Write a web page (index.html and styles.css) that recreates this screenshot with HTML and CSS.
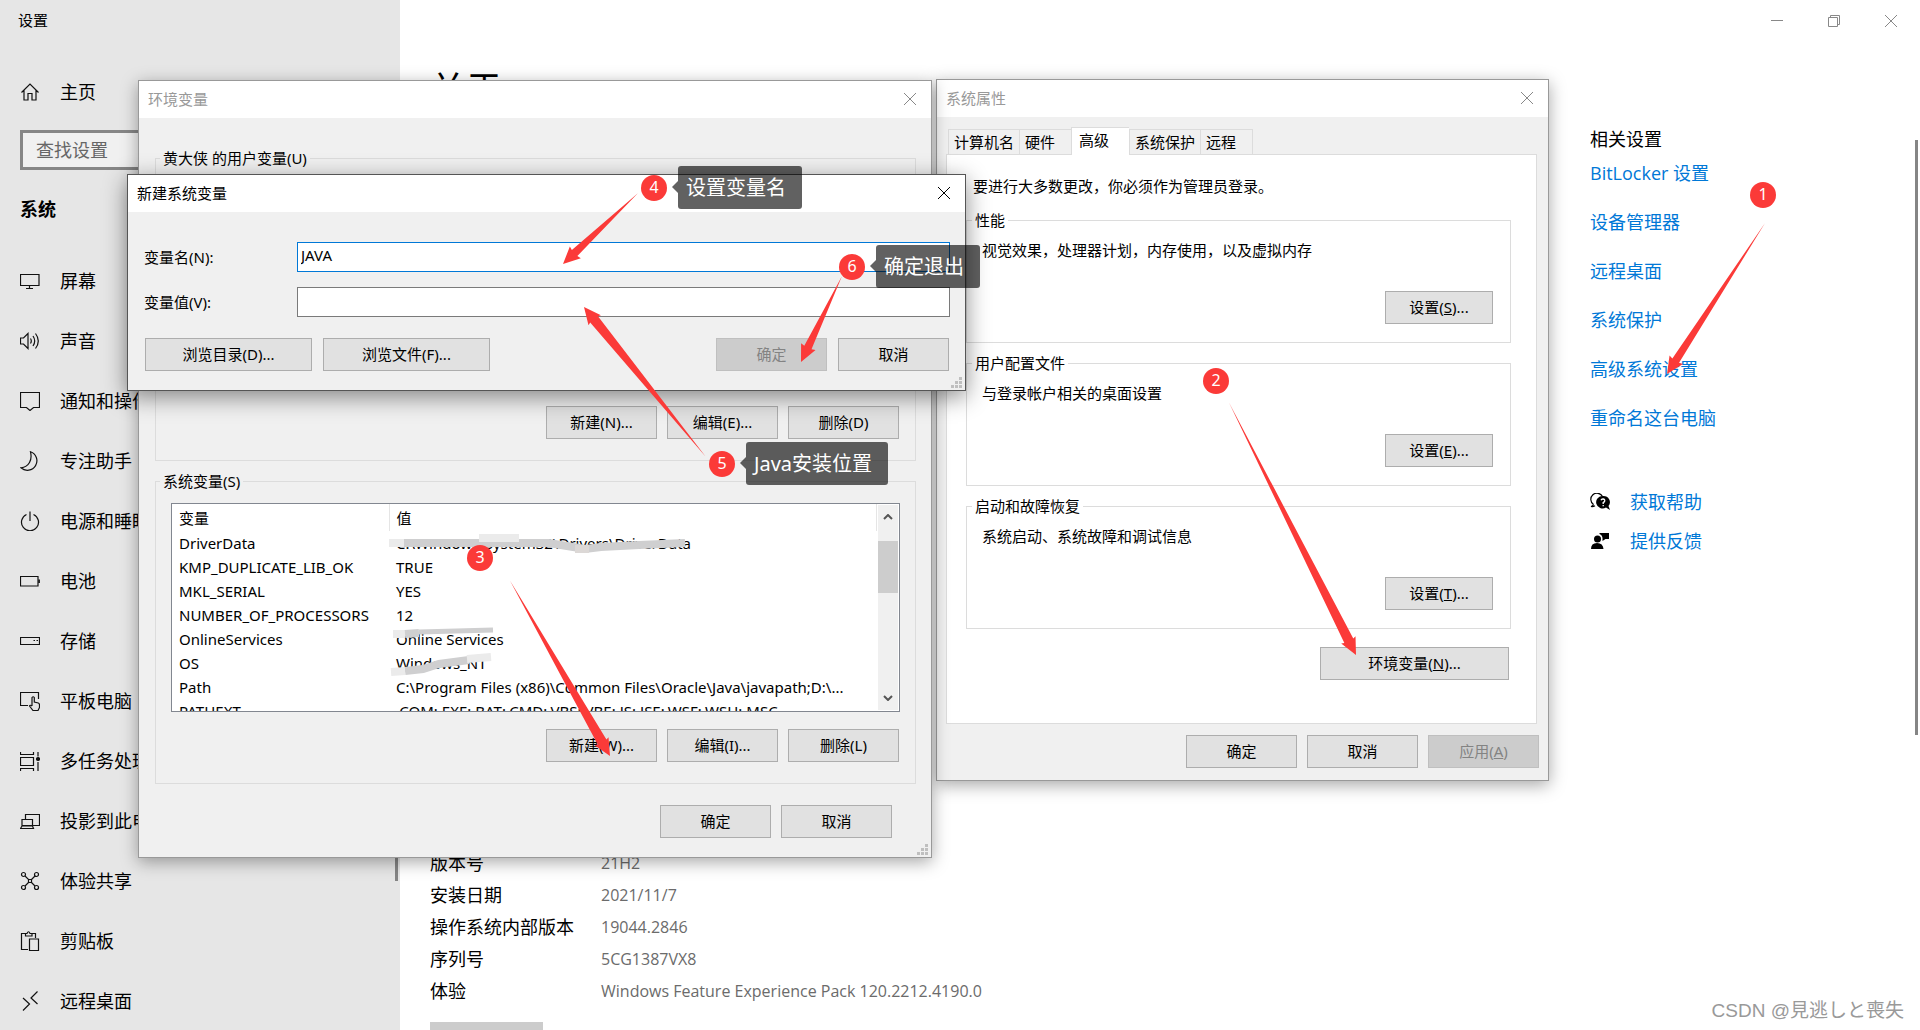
FILE: index.html
```html
<!DOCTYPE html>
<html lang="zh-CN">

<head>
    <meta charset="UTF-8">
    <title>设置</title>
    <link rel="stylesheet" href="styles.css">
</head>

<body>

    <div class="settings">
        <aside class="sidebar">
            <div class="app_title">设置</div>
            <a class="item home" href="#">
                <svg class="icon" viewBox="0 0 20 20"><path d="M1.5 10.5L10 2l8.500 8.500M4 8.500V18h4v-6.500h4V18h4V8.500" /></svg>主页
            </a>
            <input class="search" type="text" placeholder="查找设置" aria-label="查找设置">
            <h2>系统</h2>
            <nav>
                <a class="item" href="#"><svg class="icon" viewBox="0 0 20 20"><path d="M.5 3.500h18.500v11H.5zM9.500 14.500V17M6 17.500h7" /></svg>屏幕</a>
                <a class="item" href="#"><svg class="icon" viewBox="0 0 20 20"><path d="M.5 7h3L8 2.500v15L3.500 13h-3zM10.500 7.500q1.600 2.500 0 5M13 5q3.400 5 0 10M15.500 2.500q5.600 7.500 0 15" /></svg>声音</a>
                <a class="item" href="#"><svg class="icon" viewBox="0 0 20 20"><path d="M.5 1.500h19v15h-6L10 19.500l-3.500-3h-6z" /></svg>通知和操作</a>
                <a class="item" href="#"><svg class="icon" viewBox="0 0 20 20"><path d="M10.500 .8a9.500 9.500 0 1 1-9.500 16C9 16 12.500 9 10.500 .8z" /></svg>专注助手</a>
                <a class="item" href="#"><svg class="icon" viewBox="0 0 20 20"><path d="M10 .5v9.500M6.500 3.500a8.500 8.500 0 1 0 7 0" /></svg>电源和睡眠</a>
                <a class="item" href="#"><svg class="icon" viewBox="0 0 20 20"><path d="M.5 5.500h17.500v9.500H.5zM19.300 8.500v3.500" /></svg>电池</a>
                <a class="item" href="#"><svg class="icon" viewBox="0 0 20 20"><path d="M.5 6.500h19v7H.5zM13.500 9.500h1.500M16.500 9.500h1.500" /></svg>存储</a>
                <a class="item" href="#"><svg class="icon" viewBox="0 0 20 20"><path d="M8 14.500H.5v-13h18V8M12 15V6.500q1.200-1.500 2.300 0V11l4 1q1.200.5 1.200 2v2.500l-1.500 3h-5L9.500 15q.5-1.500 2.500 0" /></svg>平板电脑</a>
                <a class="item" href="#"><svg class="icon" viewBox="0 0 20 20"><path d="M.5 1v2.500h13V1M.5 6.500h13v8H.5zM.5 20v-2.500h13V20M18 1v4.500M18 11v9" /><circle class="solid" cx="18" cy="8" r="1.500" /></svg>多任务处理</a>
                <a class="item" href="#"><svg class="icon" viewBox="0 0 20 20"><path d="M5.500 8V3.500h14v11H13M2 8.500h10.500v6H2zM.5 17.500h13l-1-2.500H2z" /></svg>投影到此电脑</a>
                <a class="item" href="#"><svg class="icon" viewBox="0 0 20 20"><circle cx="3.500" cy="3.500" r="2" /><circle cx="16.500" cy="3.500" r="2" /><circle cx="3.500" cy="16.500" r="2" /><circle cx="16.500" cy="16.500" r="2" /><path d="M5 5l3.500 3.500h3v3h-3v-3M15 5l-3.500 3.500M5 15l3.500-3.500M15 15l-3.500-3.500" /></svg>体验共享</a>
                <a class="item" href="#"><svg class="icon" viewBox="0 0 20 20"><path d="M8 18.500H1.500v-16H5M12 2.500h3.500V7M5.500 5V2.500h1.500q1.500-3.500 3 0h2V5zM9.500 8h9v11.500h-9z" /></svg>剪贴板</a>
                <a class="item" href="#"><svg class="icon" viewBox="0 0 20 20"><path d="M3 7l6.500 6L3 19.500M17.500 .5L11 7l6.500 6" /></svg>远程桌面</a>
            </nav>
            <div class="side_thumb"></div>
        </aside>

        <main>
            <h1>关于</h1>
            <dl class="specs">
                <dt>版本号</dt>
                <dd>21H2</dd>
                <dt>安装日期</dt>
                <dd>2021/11/7</dd>
                <dt>操作系统内部版本</dt>
                <dd>19044.2846</dd>
                <dt>序列号</dt>
                <dd>5CG1387VX8</dd>
                <dt>体验</dt>
                <dd>Windows Feature Experience Pack 120.2212.4190.0</dd>
            </dl>
            <button class="copy" aria-label="复制"></button>
        </main>

        <aside class="related">
            <div class="window_buttons">
                <button aria-label="最小化"><svg viewBox="0 0 12 12"><path d="M0 5.500h12" /></svg></button>
                <button aria-label="还原"><svg viewBox="0 0 12 12"><path d="M.5 2.500h9v9h-9zM2.500 2.500v-2h9v9h-2" /></svg></button>
                <button aria-label="关闭"><svg viewBox="0 0 12 12"><path d="M0 0l12 12M12 0L0 12" /></svg></button>
            </div>
            <h3>相关设置</h3>
            <a href="#">BitLocker 设置</a>
            <a href="#">设备管理器</a>
            <a href="#">远程桌面</a>
            <a href="#">系统保护</a>
            <a href="#">高级系统设置</a>
            <a href="#">重命名这台电脑</a>
            <div class="help">
                <a href="#"><svg viewBox="0 0 20 18"><path class="line" d="M3.500 11.500A6.200 6.200 0 1 1 12.500 3.500M3.500 11.500q-.5 1.800-2.500 2 2 .5 4-.8" /><path d="M13 3a6.500 6.200 0 1 0 3 11.500L20 17l-1.500-4A6.500 6.200 0 0 0 13 3z" /><path class="mark" d="M11 7.300q.5-1.500 2.200-1.300 1.800.3 1.500 2-.2 1-1.500 1.500V11M13.200 12v1.300" /></svg>获取帮助</a>
                <a href="#"><svg viewBox="0 0 20 18"><circle cx="7.500" cy="7" r="3.500" /><path d="M1 17q0-6 6-6t6.500 6zM9.500 1h9.500v6h-3.500L12.500 9V6.500Q12.500 3 9.500 2z" /></svg>提供反馈</a>
            </div>
            <div class="page_thumb"></div>
        </aside>
    </div>

    <!-- 系统属性 -->
    <section class="dialog system_dialog">
        <header>系统属性<button class="close" aria-label="关闭"><svg viewBox="0 0 12 12"><path d="M0 0l12 12M12 0L0 12" /></svg></button></header>
        <div class="system_body">
            <div class="tabs" role="tablist">
                <button role="tab">计算机名</button>
                <button role="tab" class="tab_mid">硬件</button>
                <button role="tab" class="valgt" aria-selected="true">高级</button>
                <button role="tab">系统保护</button>
                <button role="tab" class="tab_mid">远程</button>
            </div>
            <div class="pane">
                <p>要进行大多数更改，你必须作为管理员登录。</p>
                <fieldset>
                    <legend>性能</legend>
                    <p>视觉效果，处理器计划，内存使用，以及虚拟内存</p>
                    <button class="btn">设置(<u>S</u>)...</button>
                </fieldset>
                <fieldset>
                    <legend>用户配置文件</legend>
                    <p>与登录帐户相关的桌面设置</p>
                    <button class="btn">设置(<u>E</u>)...</button>
                </fieldset>
                <fieldset>
                    <legend>启动和故障恢复</legend>
                    <p>系统启动、系统故障和调试信息</p>
                    <button class="btn">设置(<u>T</u>)...</button>
                </fieldset>
                <button class="btn env_button">环境变量(<u>N</u>)...</button>
            </div>
            <div class="buttons">
                <button class="btn">确定</button>
                <button class="btn">取消</button>
                <button class="btn" disabled>应用(<u>A</u>)</button>
            </div>
        </div>
    </section>

    <!-- 环境变量 -->
    <section class="dialog env_dialog">
        <header>环境变量<button class="close" aria-label="关闭"><svg viewBox="0 0 12 12"><path d="M0 0l12 12M12 0L0 12" /></svg></button></header>
        <div class="env_body">
            <fieldset>
                <legend>黄大侠 的用户变量(U)</legend>
                <div class="list"></div>
                <div class="buttons">
                    <button class="btn">新建(N)...</button>
                    <button class="btn">编辑(E)...</button>
                    <button class="btn">删除(D)</button>
                </div>
            </fieldset>
            <fieldset>
                <legend>系统变量(S)</legend>
                <div class="list">
                    <table>
                        <thead>
                            <tr><th>变量</th><th>值</th></tr>
                        </thead>
                        <tbody>
                            <tr><td>DriverData</td><td>C:\Windows\System32\Drivers\DriverData</td></tr>
                            <tr><td>KMP_DUPLICATE_LIB_OK</td><td>TRUE</td></tr>
                            <tr><td>MKL_SERIAL</td><td>YES</td></tr>
                            <tr><td>NUMBER_OF_PROCESSORS</td><td>12</td></tr>
                            <tr><td>OnlineServices</td><td>Online Services</td></tr>
                            <tr><td>OS</td><td>Windows_NT</td></tr>
                            <tr><td>Path</td><td>C:\Program Files (x86)\Common Files\Oracle\Java\javapath;D:\...</td></tr>
                            <tr><td>PATHEXT</td><td>.COM;.EXE;.BAT;.CMD;.VBS;.VBE;.JS;.JSE;.WSF;.WSH;.MSC</td></tr>
                        </tbody>
                    </table>
                    <div class="scrollbar">
                        <svg viewBox="0 0 10 6"><path d="M1 5l4-4 4 4" /></svg>
                        <div class="thumb"></div>
                        <svg viewBox="0 0 10 6"><path d="M1 1l4 4 4-4" /></svg>
                    </div>
                    <svg class="smudges" viewBox="0 0 340 180">
                        <path class="white" d="M4 32H150" />
                        <path d="M15 39H160L178 42 196 45 212 43 250 41 296 39" />
                        <path class="light" d="M0 39H15M90 34H130" />
                        <path class="warm" d="M186 45L200 45" />
                        <path class="thin" d="M30 128L104 126" />
                        <path class="light" d="M4 130H16" />
                        <path d="M16 130L30 129" />
                        <path d="M16 167L34 165 50 160 80 156" />
                        <path class="light" d="M2 168L16 167M78 155L102 153" />
                    </svg>
                </div>
                <div class="buttons">
                    <button class="btn">新建(W)...</button>
                    <button class="btn">编辑(I)...</button>
                    <button class="btn">删除(L)</button>
                </div>
            </fieldset>
            <div class="buttons bottom_buttons">
                <button class="btn">确定</button>
                <button class="btn">取消</button>
            </div>
        </div>
        <svg class="grip" viewBox="0 0 11 11"><path d="M8 0h3v3H8zM4 4h3v3H4zM8 4h3v3H8zM0 8h3v3H0zM4 8h3v3H4zM8 8h3v3H8z" /></svg>
    </section>

    <!-- 新建系统变量 -->
    <section class="dialog new_dialog">
        <header>新建系统变量<button class="close" aria-label="关闭"><svg viewBox="0 0 12 12"><path d="M0 0l12 12M12 0L0 12" /></svg></button></header>
        <div class="new_body">
            <div class="field">
                <label for="name">变量名(N):</label>
                <input id="name" class="active" type="text" value="JAVA">
            </div>
            <div class="field">
                <label for="value">变量值(V):</label>
                <input id="value" type="text">
            </div>
            <div class="buttons">
                <button class="btn wide">浏览目录(D)...</button>
                <button class="btn wide">浏览文件(F)...</button>
                <button class="btn push" disabled>确定</button>
                <button class="btn">取消</button>
            </div>
        </div>
        <svg class="grip" viewBox="0 0 11 11"><path d="M8 0h3v3H8zM4 4h3v3H4zM8 4h3v3H8zM0 8h3v3H0zM4 8h3v3H4zM8 8h3v3H8z" /></svg>
    </section>

    <!-- arrows and steps -->
    <svg class="arrows" width="1920" height="1030" viewBox="0 0 1920 1030">
        <path transform="translate(1667 374) rotate(123)" d="M0 0L-17-8-16-4-180 0-16 4-17 8z" />
        <path transform="translate(1356 655) rotate(63.3)" d="M0 0L-17-8-16-5-283 0-16 5-17 8z" />
        <path transform="translate(610 756) rotate(60.3)" d="M0 0L-17-8-16-5-202 0-16 5-17 8z" />
        <path transform="translate(563 264) rotate(136.6)" d="M0 0L-17-8-16-4-103 0-16 4-17 8z" />
        <path transform="translate(584 307) rotate(-129.1)" d="M0 0L-17-8-16-5-193 0-16 5-17 8z" />
        <path transform="translate(801 362) rotate(115.5)" d="M0 0L-17-8-16-4-95 0-16 4-17 8z" />
    </svg>
    <div class="note note1"><b>1</b></div>
    <div class="note note2"><b>2</b></div>
    <div class="note note3"><b>3</b></div>
    <div class="note note4"><b>4</b><span>设置变量名</span></div>
    <div class="note note5"><b>5</b><span>Java安装位置</span></div>
    <div class="note note6"><b>6</b><span>确定退出</span></div>

    <div class="watermark">CSDN @見逃しと喪失</div>

</body>

</html>
```
FILE: styles.css
```css
* {
    box-sizing: border-box;
}

body {
    margin: 0;
    height: 100vh;
    overflow: hidden;
    position: relative;
    background-color: white;
    color: black;
    font-family: "Noto Sans", "Noto Sans CJK SC", sans-serif;
    font-size: 15px;
    line-height: 20px;
}

button,
input {
    font: inherit;
    color: inherit;
}

a {
    text-decoration: none;
}

p,
h1,
h2,
h3,
dl,
dd {
    margin: 0;
}

/* Settings */

.settings {
    display: grid;
    grid-template-columns: 400px 1fr 330px;
    height: 100vh;
    overflow: hidden;
    font-family: "Open Sans", "Noto Sans CJK SC", sans-serif;
    font-size: 18px;
}

.sidebar {
    position: relative;
    background-color: #e6e6e6;
    overflow: hidden;
}

.app_title {
    padding: 10px 18px 0;
    font-size: 15px;
}

.item {
    display: flex;
    align-items: center;
    gap: 20px;
    height: 60px;
    padding-left: 20px;
    color: black;
    white-space: nowrap;
}

.home {
    margin-top: 32px;
}

.icon {
    width: 20px;
    height: 20px;
    flex: none;
    fill: none;
    stroke: #111;
    stroke-width: 1.2;
}

.icon .solid {
    fill: #111;
}

.search {
    display: block;
    width: 360px;
    height: 40px;
    margin: 8px 20px 0;
    padding: 0 13px;
    border: 3px solid #868686;
    border-radius: 0;
    background-color: #f0f0f0;
}

.search::placeholder {
    color: #666;
}

.sidebar h2 {
    margin: 29px 20px 32px;
    font-size: 18px;
    line-height: 20px;
}

.side_thumb {
    position: absolute;
    right: 2px;
    top: 240px;
    width: 3px;
    height: 641px;
    background-color: #858585;
}

main {
    padding: 66px 30px 0;
}

h1 {
    font-size: 36px;
    font-weight: normal;
    line-height: 48px;
}

.specs {
    display: grid;
    grid-template-columns: 171px 1fr;
    margin-top: 733px;
    line-height: 32px;
}

.specs dt {
    white-space: nowrap;
}

.specs dd {
    color: #6b6b6b;
    font-size: 16px;
}

.copy {
    display: block;
    width: 113px;
    height: 40px;
    margin-top: 15px;
    border: none;
    background-color: #ccc;
}

.related {
    position: relative;
}

.window_buttons {
    display: flex;
    justify-content: flex-end;
    height: 39px;
    padding-right: 1px;
}

.window_buttons button {
    width: 57px;
    border: none;
    background: none;
}

.window_buttons svg,
.close svg {
    width: 12px;
    height: 12px;
    fill: none;
    stroke: #888;
    overflow: visible;
}

h3 {
    margin: 90px 0 14px;
    font-size: 18px;
    font-weight: normal;
    line-height: 20px;
}

.related a {
    display: block;
    height: 49px;
    line-height: 20px;
    color: #0078d7;
}

.help {
    margin-top: 25px;
}

.related .help a {
    display: flex;
    align-items: center;
    gap: 20px;
    height: 39px;
}

.help svg {
    width: 20px;
    height: 18px;
    fill: black;
}

.help .line {
    fill: none;
    stroke: black;
    stroke-width: 1.2;
}

.help .mark {
    fill: none;
    stroke: white;
    stroke-width: 1.3;
}

.page_thumb {
    position: absolute;
    right: 2px;
    top: 140px;
    width: 3px;
    height: 595px;
    background-color: #858585;
}

/* Dialogs */

.dialog {
    position: absolute;
    border: 1px solid #999;
    background-color: #f0f0f0;
    box-shadow: 0 4px 16px rgba(0, 0, 0, .35);
}

.dialog header {
    display: flex;
    justify-content: space-between;
    align-items: center;
    height: 37px;
    padding: 0 0 2px 9px;
    background-color: white;
    color: #999;
}

.close {
    width: 43px;
    height: 35px;
    padding: 0;
    border: none;
    background: none;
}

.buttons {
    display: flex;
    justify-content: flex-end;
    gap: 10px;
}

.btn {
    width: 111px;
    height: 33px;
    padding: 0 0 2px;
    border: 1px solid #adadad;
    background-color: #e1e1e1;
    white-space: nowrap;
}

.btn:disabled {
    border-color: #bfbfbf;
    background-color: #ccc;
    color: #838383;
}

.btn:hover:enabled {
    border-color: #0078d7;
}

fieldset {
    min-width: 0;
    margin: 0;
    border: 1px solid #dcdcdc;
}

legend {
    padding: 0 3px;
}

.grip {
    position: absolute;
    right: 3px;
    bottom: 2px;
    width: 11px;
    height: 11px;
    fill: #bfbfbf;
}

.system_dialog {
    left: 936px;
    top: 79px;
    width: 613px;
}

.system_body {
    padding: 10px 11px 12px 9px;
}

.tabs {
    display: flex;
    align-items: flex-end;
    height: 27px;
    padding-left: 2px;
}

.tabs button {
    height: 25px;
    padding: 0 5px;
    border: 1px solid #dcdcdc;
    border-right: none;
    border-bottom: none;
    background-color: #f0f0f0;
}

.tabs button:last-child {
    border-right: 1px solid #dcdcdc;
}

.tabs .tab_mid {
    padding-right: 16px;
}

.tabs .valgt {
    position: relative;
    height: 28px;
    margin-bottom: -1px;
    padding: 0 20px 3px 7px;
    background-color: white;
}

.pane {
    height: 570px;
    padding: 21px 25px 0 19px;
    border: 1px solid #dcdcdc;
    background-color: white;
}

.pane > p {
    padding-left: 7px;
    margin-bottom: 14px;
}

.pane fieldset {
    display: flex;
    flex-direction: column;
    height: 133px;
    margin-bottom: 10px;
    padding: 10px 17px 0 15px;
}

.pane legend {
    margin-left: -10px;
}

.pane fieldset .btn {
    width: 108px;
    margin: 31px 0 0 auto;
}

.env_button {
    display: block;
    width: 189px;
    margin: 18px 2px 0 auto;
}

.system_body > .buttons {
    margin: 11px -2px 0 0;
}

.env_dialog {
    left: 138px;
    top: 80px;
    width: 794px;
}

.env_body {
    padding: 30px 15px 19px 16px;
}

.env_body fieldset {
    height: 313px;
    margin-bottom: 10px;
    padding: 12px 15px 0 15px;
}

.env_body legend {
    margin-left: -11px;
}

.env_body fieldset .buttons {
    padding-right: 1px;
}

.list {
    position: relative;
    display: flex;
    align-items: flex-start;
    height: 209px;
    margin-bottom: 17px;
    border: 1px solid #828790;
    background-color: white;
    overflow: hidden;
}

table {
    flex: 1;
    table-layout: fixed;
    border-collapse: collapse;
}

th,
td {
    height: 24px;
    padding: 0 7px;
    text-align: left;
    font-weight: normal;
    white-space: nowrap;
}

th {
    height: 27px;
    border-right: 1px solid #e5e5e5;
}

th:first-child {
    width: 217px;
}

.scrollbar {
    display: flex;
    flex-direction: column;
    align-items: center;
    align-self: stretch;
    width: 20px;
    margin: 1px;
    padding: 9px 0;
    background-color: #f0f0f0;
}

.scrollbar svg {
    width: 10px;
    height: 6px;
    fill: none;
    stroke: #555;
    stroke-width: 2;
}

.scrollbar .thumb {
    width: 20px;
    height: 52px;
    margin: 21px 0 auto;
    background-color: #cdcdcd;
}

.smudges {
    position: absolute;
    left: 217px;
    top: 0;
    width: 340px;
    height: 180px;
    overflow: visible;
    fill: none;
    stroke: #cfcfd0;
    stroke-width: 8;
}

.smudges .light {
    stroke: #ebebeb;
}

.smudges .white {
    stroke: white;
}

.smudges .warm {
    stroke: #dcd8d6;
}

.smudges .thin {
    stroke-width: 5;
}

.bottom_buttons {
    padding: 11px 24px 0 0;
}

.new_dialog {
    left: 127px;
    top: 174px;
    width: 839px;
    border-color: #555;
    box-shadow: 0 6px 22px rgba(0, 0, 0, .45);
}

.new_dialog header {
    color: black;
}

.new_dialog .close svg {
    stroke: black;
}

.new_body {
    padding: 30px 15px 19px 16px;
}

.field {
    display: flex;
    align-items: center;
    margin-bottom: 15px;
}

.field label {
    width: 153px;
}

.field input {
    flex: 1;
    height: 30px;
    padding: 0 3px 4px;
    border: 1px solid #7a7a7a;
}

.field .active {
    border-color: #0078d7;
}

.new_body .buttons {
    gap: 11px;
    padding: 6px 1px 0;
}

.wide {
    width: 167px;
}

.push {
    margin-left: auto;
}

/* Numbered notes */

.arrows {
    position: absolute;
    left: 0;
    top: 0;
    fill: #fb3a38;
    pointer-events: none;
}

.note {
    position: absolute;
    display: flex;
    align-items: center;
    gap: 11px;
    height: 43px;
}

.note b {
    width: 26px;
    height: 26px;
    border-radius: 50%;
    background-color: #fb3a38;
    color: white;
    font-size: 16px;
    font-weight: normal;
    line-height: 24px;
    text-align: center;
}

.note span {
    position: relative;
    padding: 0 16px 0 8px;
    border-radius: 3px;
    background-color: rgba(0, 0, 0, .62);
    color: white;
    font-size: 20px;
    line-height: 43px;
    white-space: nowrap;
}

.note span::before {
    content: "";
    position: absolute;
    left: -6px;
    top: 15px;
    border: 6px solid transparent;
    border-left: none;
    border-right-color: rgba(0, 0, 0, .62);
}

.note1 {
    left: 1750px;
    top: 173px;
}

.note2 {
    left: 1203px;
    top: 359px;
}

.note3 {
    left: 467px;
    top: 536px;
}

.note4 {
    left: 641px;
    top: 166px;
}

.note5 {
    left: 709px;
    top: 442px;
}

.note6 {
    left: 839px;
    top: 245px;
}

.watermark {
    position: absolute;
    right: 16px;
    bottom: 9px;
    color: #999;
    font-family: "Liberation Sans", "Noto Sans CJK JP", sans-serif;
    font-size: 19px;
    text-shadow: 1px 1px 1px white;
}
```
